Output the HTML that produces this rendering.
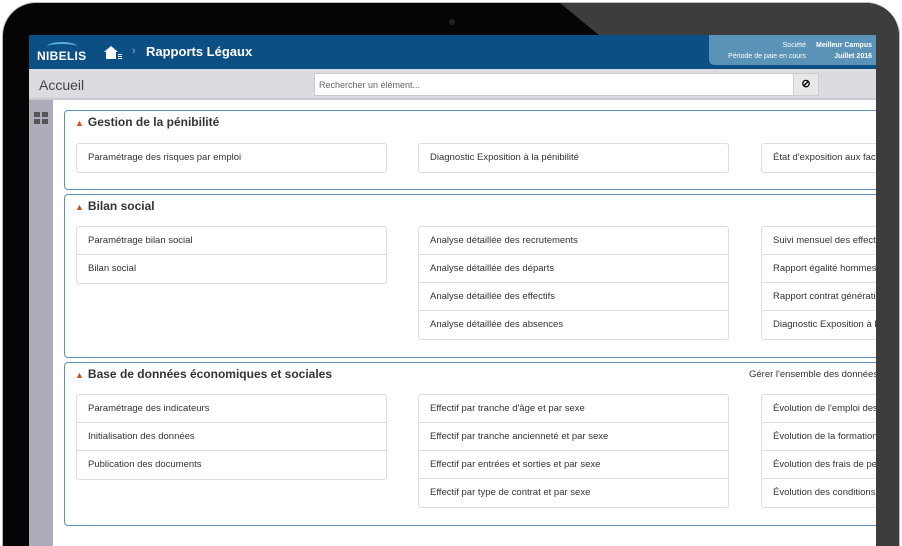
<!DOCTYPE html>
<html style="width:902px;height:546px;overflow:hidden"><head><meta charset="utf-8"><style>
*{box-sizing:border-box;margin:0;padding:0}
body{width:902px;height:546px;overflow:hidden;background:#fff;position:relative;font-family:"Liberation Sans",sans-serif;}
.bez{position:absolute;left:2px;top:2px;width:898px;height:544px;border-radius:34px 34px 0 0;background:#050505;border:1px solid #bbb;border-bottom:none}
.refl{position:absolute;left:560px;top:3px;width:339px;height:543px;background:#3d3d3d;clip-path:polygon(0 0,100% 0,100% 100%,316px 100%,316px 33px,40px 33px);border-top-right-radius:34px}
.cam{position:absolute;left:449px;top:19px;width:6px;height:6px;border-radius:50%;background:#222}
.screen{position:absolute;left:29px;top:35px;width:847px;height:511px;background:#fff;overflow:hidden}
.hdr{position:absolute;left:0;top:0;width:847px;height:34px;background:#0c4f84}
.logo{position:absolute;left:8px;top:14px;color:#fff;font-weight:bold;font-size:12px;letter-spacing:0.3px}
.arc{position:absolute;left:18px;top:7px;width:30px;height:9px;border-top:2px solid #5ab0e0;border-radius:50% 50% 0 0}
.ttl{position:absolute;left:117px;top:9px;color:#fff;font-weight:bold;font-size:13px}
.chev{position:absolute;left:103px;top:10px;color:#aac;font-size:11px}
.rp{position:absolute;left:680px;top:0;width:167px;height:30px;background:#5a93b7;border-bottom-left-radius:5px;font-size:7px;color:#fff;line-height:11px}
.tb{position:absolute;left:0;top:34px;width:847px;height:31px;background:#dcdce0;border-bottom:2px solid #c8c8d0}
.acc{position:absolute;left:10px;top:8px;font-size:14px;color:#444}
.srch{position:absolute;left:285px;top:4px;width:480px;height:23px;background:#fff;border:1px solid #ccc;font-size:9px;color:#666;padding:6px 4px}
.btn{position:absolute;left:764px;top:4px;width:26px;height:23px;background:#e8e8e8;border:1px solid #ccc;text-align:center;font-size:11px;font-weight:bold;line-height:21px}
.side{position:absolute;left:0;top:65px;width:24px;height:446px;background:#adaab9}
.grid{position:absolute;left:5px;top:12px;width:14px;height:12px}
.grid i{position:absolute;width:6px;height:5px;background:#555}
.sec{position:absolute;left:35px;width:830px;border:1px solid #5e8fb4;border-radius:4px}
.st{position:absolute;left:10px;top:4px;font-size:12px;font-weight:bold;color:#333}
.st b{color:#e04a1a;font-size:9px;margin-right:4px}
.list{position:absolute;width:311px;border:1px solid #ddd;border-radius:3px;background:#fff}
.list div{height:28px;line-height:27px;border-bottom:1px solid #ddd;padding-left:11px;font-size:9.5px;color:#333;white-space:nowrap;overflow:hidden}
.list div:last-child{border-bottom:none}
</style></head><body>
<div class="bez"></div><div class="refl"></div><div class="cam"></div>
<div class="screen">
<div class="hdr"><div class="arc"></div><div class="logo">NIBELIS</div>
<svg style="position:absolute;left:74px;top:9px" width="20" height="16"><path d="M1 8 L8 2 L15 8 L13 8 L13 15 L3 15 L3 8Z" fill="#fff"/><rect x="15" y="10" width="4" height="1" fill="#fff"/><rect x="15" y="12" width="4" height="1" fill="#fff"/><rect x="15" y="14" width="4" height="1" fill="#fff"/></svg>
<div class="chev">›</div><div class="ttl">Rapports Légaux</div>
<div class="rp"><div style="position:absolute;right:70px;top:5px;text-align:right">Société<br>Période de paie en cours</div><div style="position:absolute;right:4px;top:5px;text-align:right;font-weight:bold">Meilleur Campus<br>Juillet 2016</div></div></div>
<div class="tb"><div class="acc">Accueil</div><div class="srch">Rechercher un élément...</div><div class="btn">⊘</div></div>
<div class="side"><div class="grid"><i style="left:0;top:0"></i><i style="left:8px;top:0"></i><i style="left:0;top:7px"></i><i style="left:8px;top:7px"></i></div></div>

<div class="sec" style="top:75px;height:80px"><div class="st"><b>▲</b>Gestion de la pénibilité</div>
<div class="list" style="left:11px;top:32px"><div>Paramétrage des risques par emploi</div></div>
<div class="list" style="left:353px;top:32px"><div>Diagnostic Exposition à la pénibilité</div></div>
<div class="list" style="left:696px;top:32px"><div>État d'exposition aux facteurs</div></div></div>

<div class="sec" style="top:159px;height:164px"><div class="st"><b>▲</b>Bilan social</div>
<div class="list" style="left:11px;top:31px"><div>Paramétrage bilan social</div><div>Bilan social</div></div>
<div class="list" style="left:353px;top:31px"><div>Analyse détaillée des recrutements</div><div>Analyse détaillée des départs</div><div>Analyse détaillée des effectifs</div><div>Analyse détaillée des absences</div></div>
<div class="list" style="left:696px;top:31px"><div>Suivi mensuel des effectifs</div><div>Rapport égalité hommes femmes</div><div>Rapport contrat génération</div><div>Diagnostic Exposition à la pénibilité</div></div></div>

<div class="sec" style="top:327px;height:164px"><div class="st"><b>▲</b>Base de données économiques et sociales</div>
<div style="position:absolute;left:684px;top:6px;font-size:9.5px;color:#333;white-space:nowrap">Gérer l'ensemble des données</div>
<div class="list" style="left:11px;top:31px"><div>Paramétrage des indicateurs</div><div>Initialisation des données</div><div>Publication des documents</div></div>
<div class="list" style="left:353px;top:31px"><div>Effectif par tranche d'âge et par sexe</div><div>Effectif par tranche ancienneté et par sexe</div><div>Effectif par entrées et sorties et par sexe</div><div>Effectif par type de contrat et par sexe</div></div>
<div class="list" style="left:696px;top:31px"><div>Évolution de l'emploi des</div><div>Évolution de la formation</div><div>Évolution des frais de personnel</div><div>Évolution des conditions</div></div></div>
</div>
</body></html>
